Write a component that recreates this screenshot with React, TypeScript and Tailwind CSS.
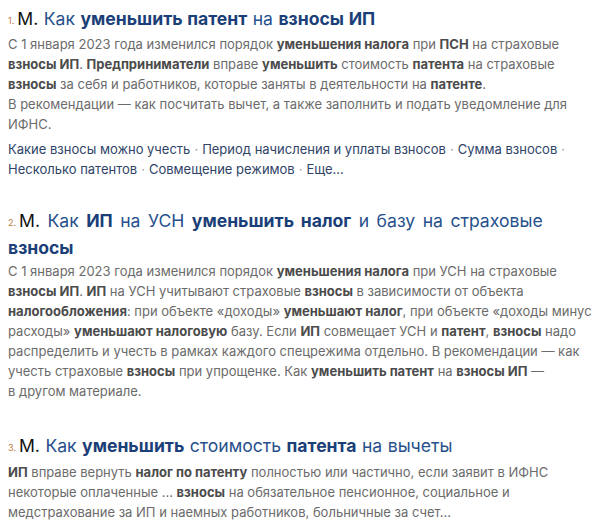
import type { ReactNode } from "react";

const B = ({ children }: { children: ReactNode }) => (
  <b className="font-bold text-[#4b4b4b]">{children}</b>
);

const T = ({ children }: { children: ReactNode }) => (
  <b className="font-bold text-[#1b3f78]">{children}</b>
);

const Line = ({ children }: { children: ReactNode }) => (
  <span className="block whitespace-nowrap">{children}</span>
);

const Title = ({ n, wide, children }: { n: number; wide?: boolean; children: ReactNode }) => (
  <h2
    className={
      wide
        ? "text-[17.6px] leading-[25px] font-normal text-[#27508c] [word-spacing:2.5px]"
        : "text-[17.6px] leading-[25px] font-normal text-[#27508c] [word-spacing:0.5px]"
    }
  >
    <span className="text-[9px] text-[#c07a3e] mr-[3px] align-[1px]">{n}.</span>
    <span className="text-[#111]">М.</span> {children}
  </h2>
);

const Dot = () => <span className="text-[#9a9a9a] mx-[4px]">·</span>;

export default function App() {
  return (
    <div className="w-[600px] h-[523px] bg-white px-[8px] overflow-hidden font-['Inter','Liberation_Sans',sans-serif] text-[13px] leading-[20px] text-[#6b6b6b]">
      {/* 1 */}
      <div className="pt-[6px]">
        <Title n={1}>
          Как <T>уменьшить патент</T> на <T>взносы ИП</T>
        </Title>
        <p className="mt-[1px]">
          <Line>
            С 1 января 2023 года изменился порядок <B>уменьшения налога</B> при <B>ПСН</B> на страховые
          </Line>
          <Line>
            <B>взносы ИП</B>. <B>Предприниматели</B> вправе <B>уменьшить</B> стоимость <B>патента</B> на страховые
          </Line>
          <Line>
            <B>взносы</B> за себя и работников, которые заняты в деятельности на <B>патенте</B>.
          </Line>
          <Line>В рекомендации — как посчитать вычет, а также заполнить и подать уведомление для</Line>
          <Line>ИФНС.</Line>
        </p>
        <p className="mt-[5px] text-[#2f4468]">
          <Line>
            Какие взносы можно учесть
            <Dot />
            Период начисления и уплаты взносов
            <Dot />
            Сумма взносов
            <Dot />
          </Line>
          <Line>
            Несколько патентов
            <Dot />
            Совмещение режимов
            <Dot />
            Еще...
          </Line>
        </p>
      </div>

      {/* 2 */}
      <div className="mt-[29px]">
        <Title n={2} wide>
          Как <T>ИП</T> на УСН <T>уменьшить налог</T> и базу на страховые
          <br />
          <T>взносы</T>
        </Title>
        <p className="mt-[1px]">
          <Line>
            С 1 января 2023 года изменился порядок <B>уменьшения налога</B> при УСН на страховые
          </Line>
          <Line>
            <B>взносы ИП</B>. <B>ИП</B> на УСН учитывают страховые <B>взносы</B> в зависимости от объекта
          </Line>
          <Line>
            <B>налогообложения</B>: при объекте «доходы» <B>уменьшают налог</B>, при объекте «доходы минус
          </Line>
          <Line>
            расходы» <B>уменьшают налоговую</B> базу. Если <B>ИП</B> совмещает УСН и <B>патент</B>, <B>взносы</B> надо
          </Line>
          <Line>распределить и учесть в рамках каждого спецрежима отдельно. В рекомендации — как</Line>
          <Line>
            учесть страховые <B>взносы</B> при упрощенке. Как <B>уменьшить патент</B> на <B>взносы ИП</B> —
          </Line>
          <Line>в другом материале.</Line>
        </p>
      </div>

      {/* 3 */}
      <div className="mt-[32px]">
        <Title n={3}>
          Как <T>уменьшить</T> стоимость <T>патента</T> на вычеты
        </Title>
        <p className="mt-[2px]">
          <Line>
            <B>ИП</B> вправе вернуть <B>налог по патенту</B> полностью или частично, если заявит в ИФНС
          </Line>
          <Line>
            некоторые оплаченные ... <B>взносы</B> на обязательное пенсионное, социальное и
          </Line>
          <Line>медстрахование за ИП и наемных работников, больничные за счет...</Line>
        </p>
      </div>
    </div>
  );
}
